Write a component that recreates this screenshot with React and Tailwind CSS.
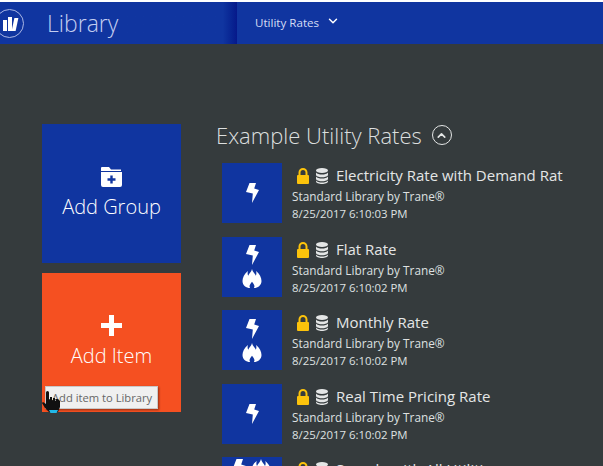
import { ChevronDown, ChevronUp } from "lucide-react";

const RATES = [
  { name: "Electricity Rate with Demand Rat", date: "8/25/2017 6:10:03 PM", gas: false },
  { name: "Flat Rate", date: "8/25/2017 6:10:02 PM", gas: true },
  { name: "Monthly Rate", date: "8/25/2017 6:10:02 PM", gas: true },
  { name: "Real Time Pricing Rate", date: "8/25/2017 6:10:02 PM", gas: false },
  { name: "Sample with All Utilities", date: "8/25/2017 6:10:02 PM", gas: true, wide: true },
];

function Bolt({ className }) {
  return (
    <svg viewBox="0 0 13 20" className={className} fill="currentColor">
      <path d="M3.500 0H10L8.200 5.500 13 7 6 20l.8-9.500L0 9z" />
    </svg>
  );
}

function Flame({ className }) {
  return (
    <svg viewBox="0 0 20 20" className={className} fill="currentColor">
      <path d="M10 0c.5 3 3 4.500 4 7 .8-1.500 .8-3 .3-5C18 5 20 9 20 12.500 20 17 16 20 12 20c1-1.500 1-3-2-6.500C7 17 7 18.500 8 20 4 20 0 17 0 12.500 0 9 2 5 5.700 2c-.5 2-.5 3.500.3 5 1-2.500 3.500-4 4-7z" />
    </svg>
  );
}

function Lock() {
  return (
    <svg viewBox="0 0 12 16" className="w-[12px] h-[16px] text-[#fcc30b]" fill="currentColor">
      <path d="M1.500 7V4.500a4.500 4.500 0 0 1 9 0V7h.5a1 1 0 0 1 1 1v7a1 1 0 0 1-1 1H1a1 1 0 0 1-1-1V8a1 1 0 0 1 1-1zm2 0h5V4.500a2.500 2.500 0 0 0-5 0z" />
    </svg>
  );
}

function Database() {
  return (
    <svg viewBox="0 0 12 16" className="w-[12px] h-[16px] text-[#e4e6e6]" fill="currentColor">
      <ellipse cx="6" cy="2.500" rx="6" ry="2.500" />
      <path d="M0 4.500c1 1.500 3.500 2 6 2s5-.5 6-2v2.800c-1 1.500-3.500 2-6 2s-5-.5-6-2z" />
      <path d="M0 8.500c1 1.500 3.500 2 6 2s5-.5 6-2v2.800c-1 1.500-3.500 2-6 2s-5-.5-6-2z" />
      <path d="M0 12.500c1 1.500 3.500 2 6 2s5-.5 6-2v1c0 1.500-3 2.500-6 2.500s-6-1-6-2.500z" />
    </svg>
  );
}

function LibraryLogo() {
  return (
    <div className="w-[29px] h-[29px] rounded-full border border-[#a9b6e4] flex items-end justify-center gap-[1px] pb-[6px] shrink-0 -ml-[5px]">
      <span className="w-[4px] h-[11px] bg-white" />
      <span className="w-[4px] h-[14px] bg-white" />
      <span className="w-[4px] h-[13px] bg-white -skew-x-12" />
    </div>
  );
}

function RateRow({ rate }) {
  return (
    <div className="flex h-[60px] shrink-0">
      {rate.wide ? (
        <div className="w-[60px] h-[60px] bg-[#1035a0] flex justify-center gap-[5px] pt-[2px] text-white shrink-0">
          <Bolt className="w-[13px] h-[20px]" />
          <Flame className="w-[20px] h-[20px]" />
        </div>
      ) : (
        <div className="w-[60px] h-[60px] bg-[#1035a0] flex flex-col items-center justify-center gap-[4px] text-white shrink-0">
          <Bolt className="w-[13px] h-[20px]" />
          {rate.gas && <Flame className="w-[20px] h-[19px]" />}
        </div>
      )}
      <div className="ml-[10px] min-w-0">
        <div className="flex items-center h-[26px]">
          <span className="ml-[5px]"><Lock /></span>
          <span className="ml-[7px]"><Database /></span>
          <span className="ml-[8px] -mt-[2px] text-[15px] leading-[26px] text-[#e4e6e6] whitespace-nowrap">{rate.name}</span>
        </div>
        <p className="-mt-[1px] text-[11.800px] leading-[17px] text-[#dfe1e1] whitespace-nowrap">Standard Library by Trane®</p>
        <p className="text-[11.400px] leading-[17px] text-[#dfe1e1] whitespace-nowrap">{rate.date}</p>
      </div>
    </div>
  );
}

export default function App() {
  return (
    <div className="w-[603px] h-[466px] overflow-hidden bg-[#353b3d] font-['Open_Sans','Noto_Sans',sans-serif] flex flex-col">
      <div className="h-[2px] bg-white shrink-0" />
      <header className="h-[42px] bg-[#1035a0] flex items-center shrink-0">
        <div className="w-[237px] h-full flex items-center bg-gradient-to-r from-[#1035a0] from-[94%] to-[#06188a]">
          <LibraryLogo />
          <span className="ml-[23px] mt-[1px] text-[23px] font-light text-[#c3cdf0]">Library</span>
        </div>
        <span className="ml-[18px] text-[11.600px] text-[#d5dcf4]">Utility Rates</span>
        <ChevronDown className="ml-[7px] -mt-[5px] w-[14px] h-[14px] text-white" strokeWidth={2.500} />
      </header>
      <main className="flex flex-1 min-h-0 pl-[42px] pt-[80px]">
        <div className="w-[139px] flex flex-col gap-[10px] shrink-0">
          <button type="button" className="h-[139px] bg-[#1035a0] text-white flex flex-col items-center justify-center pt-[1px]">
            <svg viewBox="0 0 21 20" className="w-[21px] h-[20px]" fill="currentColor">
              <path d="M1 0h7l2 2.500h10v1.500H0V1a1 1 0 0 1 1-1z" />
              <path fillRule="evenodd" d="M0 5h21v13a2 2 0 0 1-2 2H2a2 2 0 0 1-2-2zm9.300 3.500v2.800H6.500v2.400h2.800v2.800h2.400v-2.800h2.800v-2.400h-2.800V8.500z" />
            </svg>
            <span className="mt-[5px] text-[20px] font-light leading-[30px] text-white">Add Group</span>
          </button>
          <div className="relative h-[139px]">
            <button type="button" className="w-full h-full bg-[#f55021] text-white flex flex-col items-center justify-center">
              <svg viewBox="0 0 21 21" className="w-[21px] h-[21px]" fill="currentColor">
                <path d="M8 0h5v8h8v5h-8v8H8v-8H0V8h8z" />
              </svg>
              <span className="mt-[5px] text-[20px] font-light leading-[30px] text-white">Add Item</span>
            </button>
            <div className="absolute left-[3px] top-[113px] w-[113px] h-[23px] bg-[#f0f0f0] border border-[#c8c8c8] shadow-[1px_1px_2px_rgba(0,0,0,0.4)] pl-[6px] text-[11.200px] leading-[21px] text-[#666] whitespace-nowrap">
              Add item to Library
            </div>
            <svg viewBox="0 0 20 23" className="absolute left-0 top-[118px] w-[20px] h-[23px]">
              <path d="M4 1.500a1.500 1.500 0 0 1 3 0V8l1 .5V6h2v3l1 .2V7h2v2.500l1 .3V8h2l2 2v6l-2 5H7l-4-4-3-5 1-1 3 2z" fill="#111" />
              <path d="M7 19h9l-1.500 3h-6z" fill="#22b8e8" />
            </svg>
          </div>
        </div>
        <section className="ml-[35px] min-w-0 flex-1">
          <div className="flex items-center h-[26px] -mt-[2px]">
            <h1 className="text-[22px] font-light leading-[26px] text-[#dcdfdf] whitespace-nowrap">Example Utility Rates</h1>
            <span className="ml-[10px] w-[20px] h-[20px] rounded-full border-[1.500px] border-[#e4e6e6] flex items-center justify-center">
              <ChevronUp className="w-[13px] h-[13px] text-[#e4e6e6]" strokeWidth={3} />
            </span>
          </div>
          <div className="mt-[15px] ml-[6px] flex flex-col gap-[13.500px]">
            {RATES.map((rate) => (
              <RateRow key={rate.name} rate={rate} />
            ))}
          </div>
        </section>
      </main>
    </div>
  );
}
